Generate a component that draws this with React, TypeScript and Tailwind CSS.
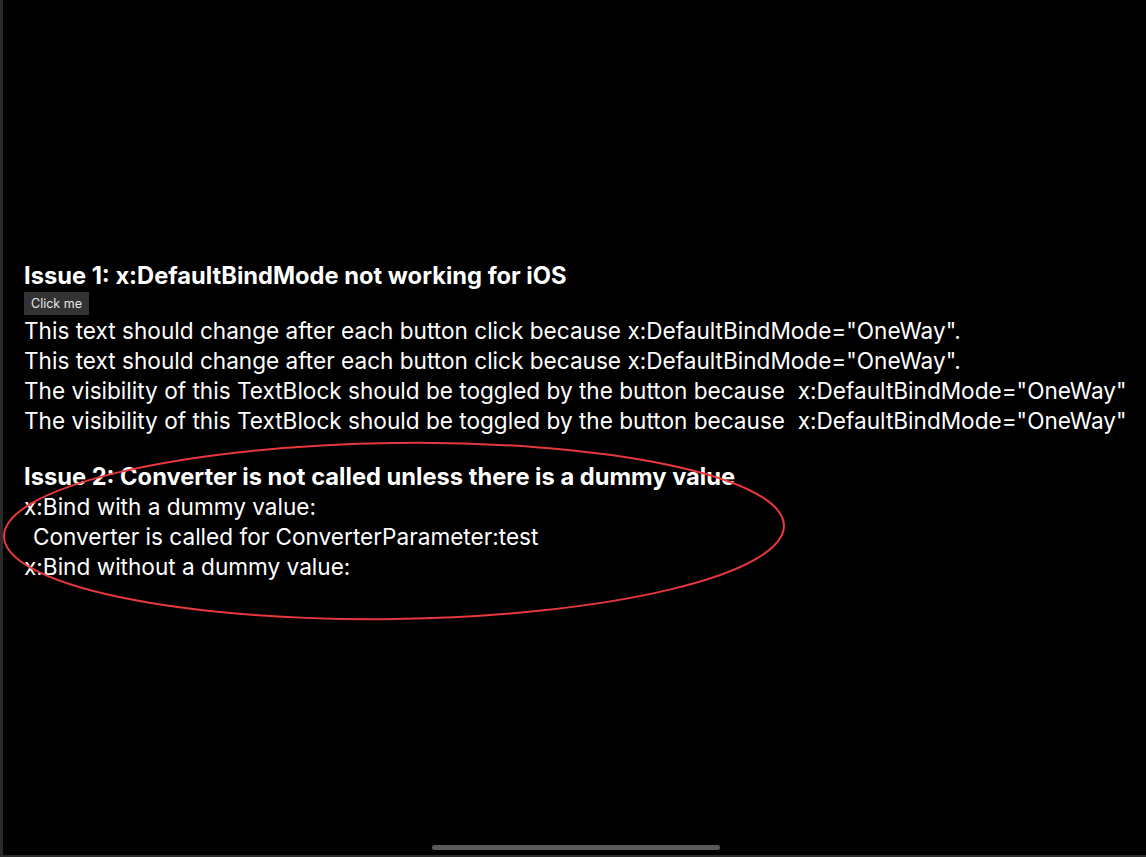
import React from "react";

const lineCls = "text-[22.6px] leading-[30px] text-white whitespace-pre";
const headCls = "text-[23.7px] font-bold leading-[30px] text-white";

export default function App() {
  return (
    <div
      className="relative h-[857px] w-[1146px] overflow-hidden border-b-2 border-l-[3px] border-[#2b2b2b] bg-black"
      style={{ fontFamily: "Inter, 'Noto Sans', sans-serif" }}
    >
      <div className="flex flex-col pl-[21px] pt-[261px]">
        <h1 className={`h-[31px] ${headCls}`}>Issue 1: x:DefaultBindMode not working for iOS</h1>
        <div className="flex h-[24px] items-start">
          <span className="block h-[23px] bg-[#333333] px-[7px] text-[12.5px] leading-[23px] text-[#e6e6e6]">
            Click me
          </span>
        </div>
        <p className={lineCls}>This text should change after each button click because x:DefaultBindMode="OneWay".</p>
        <p className={lineCls}>This text should change after each button click because x:DefaultBindMode="OneWay".</p>
        <p className={lineCls}>The visibility of this TextBlock should be toggled by the button because  x:DefaultBindMode="OneWay"</p>
        <p className={lineCls}>The visibility of this TextBlock should be toggled by the button because  x:DefaultBindMode="OneWay"</p>
        <h2 className={`mt-[26px] ${headCls}`}>
          Issue 2: Converter is not called unless there is a dummy value
        </h2>
        <p className={lineCls}>x:Bind with a dummy value:</p>
        <p className={`pl-[9px] ${lineCls}`}>Converter is called for ConverterParameter:test</p>
        <p className={lineCls}>x:Bind without a dummy value:</p>
      </div>

      {/* red annotation ellipse */}
      <svg className="pointer-events-none absolute left-0 top-0" width="1146" height="857">
        <ellipse
          cx="391"
          cy="531"
          rx="390"
          ry="88"
          fill="none"
          stroke="#e8383d"
          strokeWidth="2"
          transform="rotate(-0.8 391 531)"
        />
      </svg>

      {/* home indicator */}
      <div className="absolute left-[429px] top-[845px] h-[5px] w-[288px] rounded-full bg-[#5a5a5a]" />
    </div>
  );
}
